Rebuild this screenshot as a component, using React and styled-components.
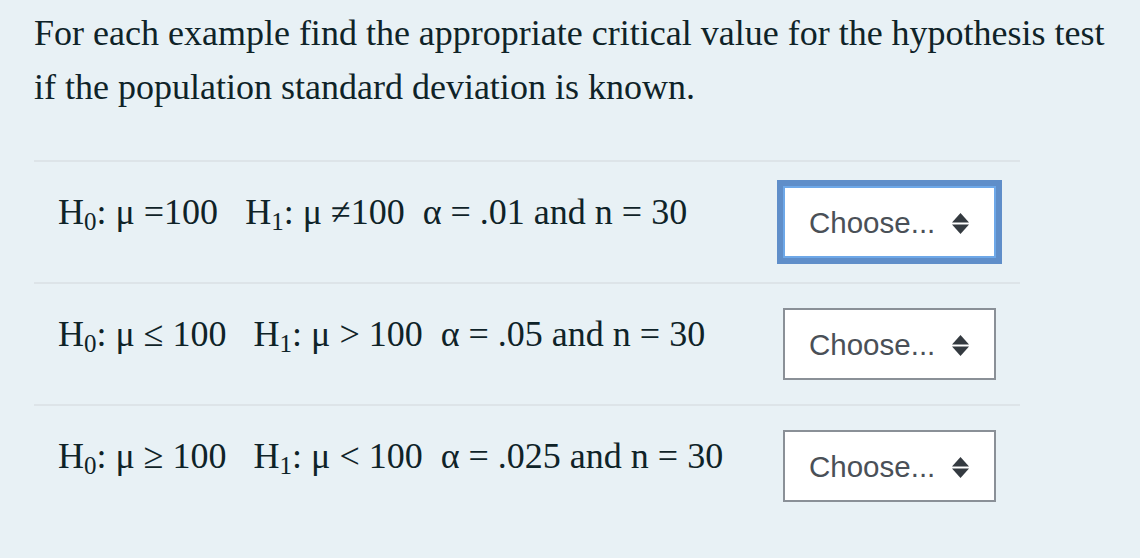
import styled, { createGlobalStyle } from "styled-components";

const Global = createGlobalStyle`
  html, body {
    margin: 0;
    background: #e8f1f5;
  }
`;

const Page = styled.div`
  width: 1140px;
  height: 558px;
  background: #e8f1f5;
  padding: 6px 0 0 34px;
  box-sizing: border-box;
  font-family: "Liberation Serif", "Times New Roman", serif;
  color: #0f2328;
  overflow: hidden;
`;

const Prompt = styled.p`
  margin: 0;
  font-size: 36px;
  line-height: 54px;
  white-space: nowrap;
`;

const Table = styled.div`
  margin-top: 46px;
  width: 986px;
`;

const Row = styled.div`
  height: 122px;
  box-sizing: border-box;
  border-top: 2px solid #dde4e8;
  padding-left: 24px;
  display: grid;
  grid-template-columns: 725px 213px;
  align-items: center;
`;

const Question = styled.div`
  font-size: 36px;
  line-height: 54px;
  margin-bottom: 20px;
  white-space: nowrap;

  sub {
    font-size: 25px;
    line-height: 0;
    vertical-align: -6px;
  }
`;

const Select = styled.div`
  height: 72px;
  box-sizing: border-box;
  background: #fff;
  border: 2px solid ${(p) => (p.$focused ? "#6ea8e8" : "#8a9097")};
  box-shadow: ${(p) => (p.$focused ? "0 0 0 6px #5f8ec9" : "none")};
  display: flex;
  align-items: center;
  padding: 2px 0 0 24px;
  gap: 17px;
  font-family: "Liberation Sans", Arial, sans-serif;
  font-size: 29.5px;
  color: #4a5057;
`;

const Arrows = () => (
  <svg width="17" height="21" viewBox="0 0 17 21" fill="#343a40">
    <polygon points="0,9.5 8.5,0 17,9.5" />
    <polygon points="0,11.5 17,11.5 8.5,21" />
  </svg>
);

const rows = [
  {
    h0: "μ =100",
    h1: "μ ≠100",
    rest: "α = .01 and n = 30",
    focused: true,
  },
  {
    h0: "μ ≤ 100",
    h1: "μ > 100",
    rest: "α = .05 and n = 30",
  },
  {
    h0: "μ ≥ 100",
    h1: "μ < 100",
    rest: "α = .025 and n = 30",
  },
];

export default function App() {
  return (
    <>
      <Global />
      <Page>
        <Prompt>
          For each example find the appropriate critical value for the hypothesis test
          <br />
          if the population standard deviation is known.
        </Prompt>
        <Table>
          {rows.map((r, i) => (
            <Row key={i}>
              <Question>
                H<sub>0</sub>: {r.h0}&nbsp;&nbsp; H<sub>1</sub>: {r.h1}&nbsp; {r.rest}
              </Question>
              <Select $focused={r.focused}>
                <span>Choose...</span>
                <Arrows />
              </Select>
            </Row>
          ))}
        </Table>
      </Page>
    </>
  );
}
